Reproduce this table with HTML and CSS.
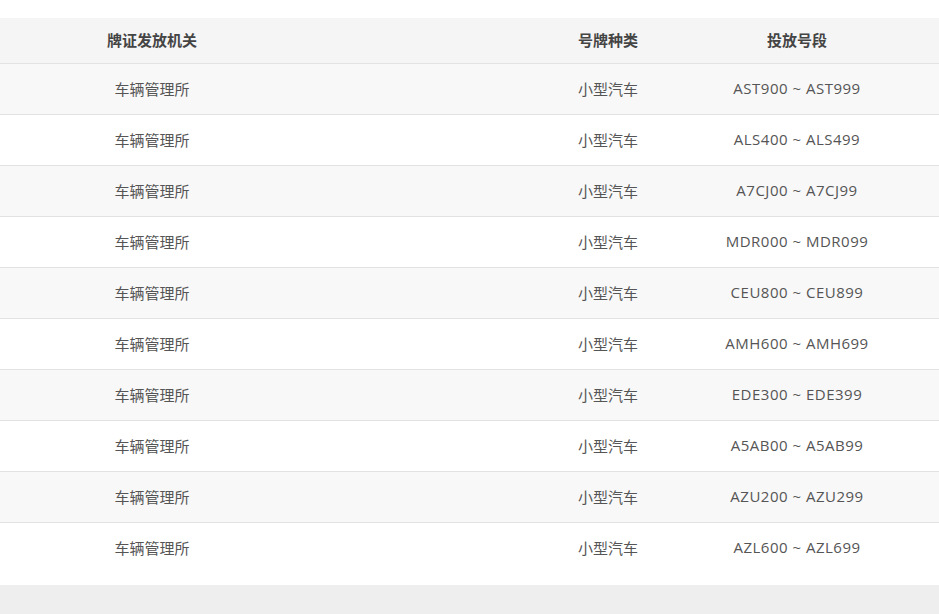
FILE: index.html
```html
<!DOCTYPE html>
<html lang="zh-CN">
<head>
<meta charset="utf-8">
<link rel="stylesheet" href="styles.css">
</head>
<body>
<div class="page">
  <div class="table">
    <div class="row head">
      <div class="c1">牌证发放机关</div><div class="sp"></div><div class="c2">号牌种类</div><div class="c3">投放号段</div><div></div>
    </div>
    <div class="row odd"><div class="c1">车辆管理所</div><div class="sp"></div><div class="c2">小型汽车</div><div class="c3 code">AST900 ~ AST999</div><div></div></div>
    <div class="row"><div class="c1">车辆管理所</div><div class="sp"></div><div class="c2">小型汽车</div><div class="c3 code">ALS400 ~ ALS499</div><div></div></div>
    <div class="row odd"><div class="c1">车辆管理所</div><div class="sp"></div><div class="c2">小型汽车</div><div class="c3 code">A7CJ00 ~ A7CJ99</div><div></div></div>
    <div class="row"><div class="c1">车辆管理所</div><div class="sp"></div><div class="c2">小型汽车</div><div class="c3 code">MDR000 ~ MDR099</div><div></div></div>
    <div class="row odd"><div class="c1">车辆管理所</div><div class="sp"></div><div class="c2">小型汽车</div><div class="c3 code">CEU800 ~ CEU899</div><div></div></div>
    <div class="row"><div class="c1">车辆管理所</div><div class="sp"></div><div class="c2">小型汽车</div><div class="c3 code">AMH600 ~ AMH699</div><div></div></div>
    <div class="row odd"><div class="c1">车辆管理所</div><div class="sp"></div><div class="c2">小型汽车</div><div class="c3 code">EDE300 ~ EDE399</div><div></div></div>
    <div class="row"><div class="c1">车辆管理所</div><div class="sp"></div><div class="c2">小型汽车</div><div class="c3 code">A5AB00 ~ A5AB99</div><div></div></div>
    <div class="row odd"><div class="c1">车辆管理所</div><div class="sp"></div><div class="c2">小型汽车</div><div class="c3 code">AZU200 ~ AZU299</div><div></div></div>
    <div class="row last"><div class="c1">车辆管理所</div><div class="sp"></div><div class="c2">小型汽车</div><div class="c3 code">AZL600 ~ AZL699</div><div></div></div>
  </div>
  <div class="footer"></div>
</div>
</body>
</html>
```
FILE: styles.css
```css
html, body { margin: 0; padding: 0; background: #fff; }
body {
  font-family: "Open Sans", "Noto Sans CJK SC", sans-serif;
  font-size: 15px;
  color: #555;
}
.page { padding-top: 18px; }
.table { background: #fff; padding-bottom: 12px; }
.row {
  display: grid;
  grid-template-columns: 304px 224px 160px 218px 1fr;
  height: 50px;
  box-sizing: border-box;
  padding-bottom: 2px;
  align-items: center;
  border-bottom: 1px solid #e2e2e2;
  text-align: center;
}
.row { height: 51px; }
.row.last { border-bottom: none; height: 50px; }
.row.head {
  height: 46px;
  background: #f5f5f5;
  font-weight: bold;
  color: #444;
}
.row.odd { background: #f8f8f8; }
.code { letter-spacing: 0.5px; }
.footer { background: #eeeeee; height: 29px; }
```
